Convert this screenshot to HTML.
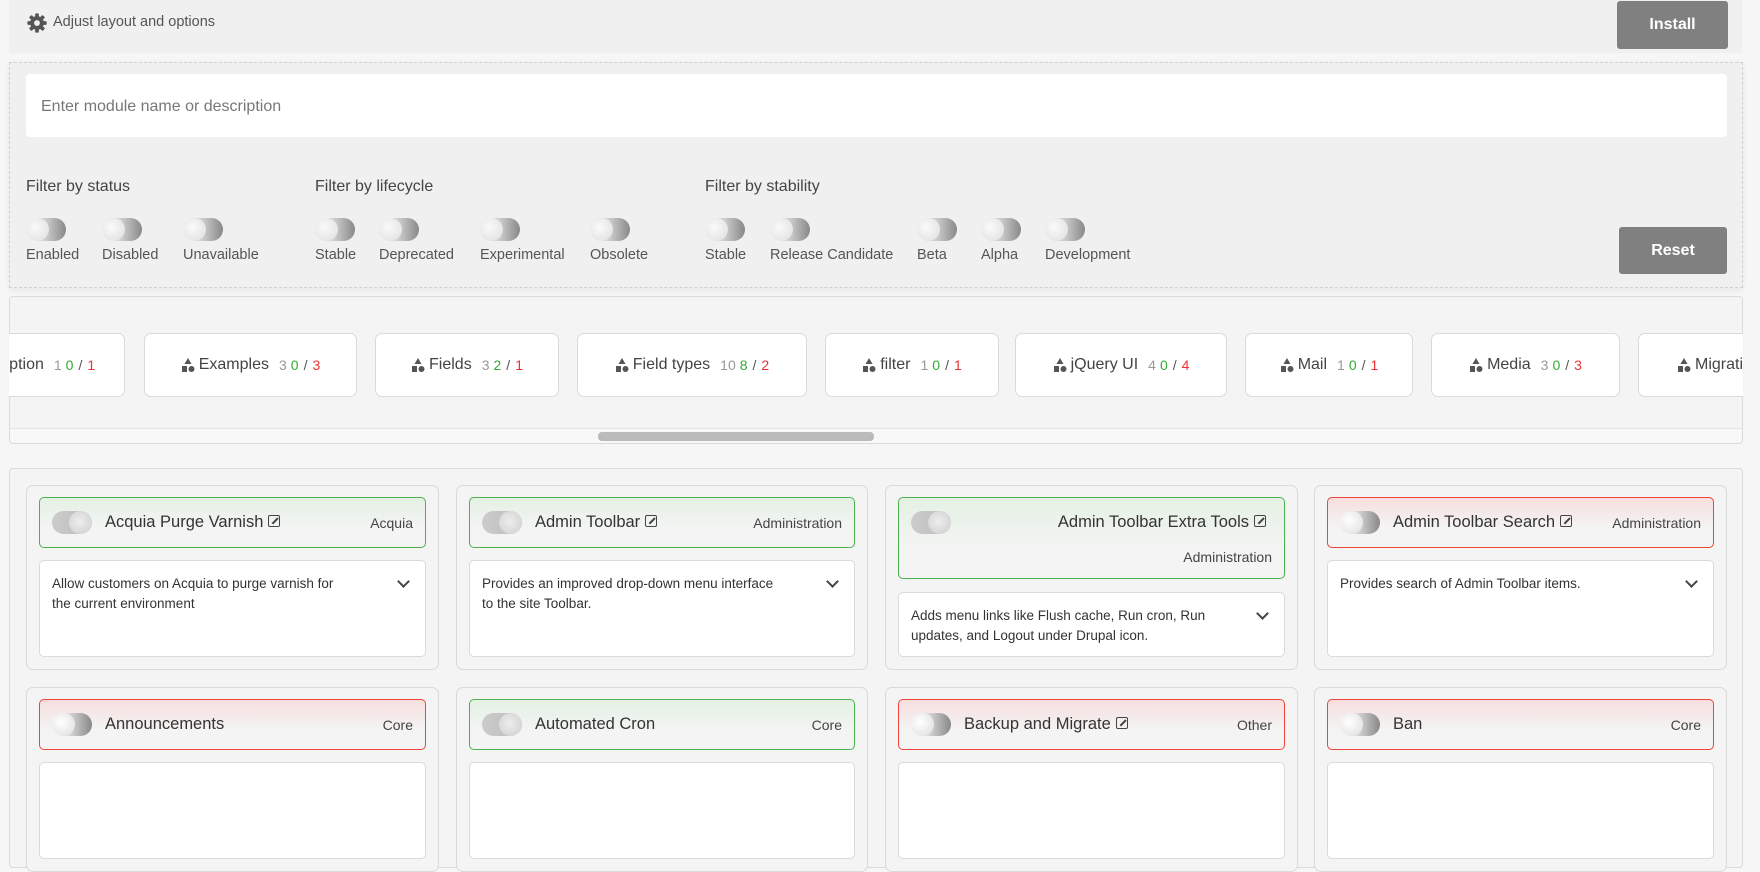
<!DOCTYPE html>
<html><head><meta charset="utf-8"><style>
*{box-sizing:border-box;margin:0;padding:0}
body{width:1760px;height:775px;overflow:hidden;background:#f5f6f5;font-family:"Liberation Sans",sans-serif;color:#333;position:relative}
.a{position:absolute}
.btn{background:#808080;color:#fff;font-weight:bold;font-size:16px;border-radius:3px;display:flex;align-items:center;justify-content:center}
.tg{position:absolute;width:40px;height:23px;border-radius:12px;background:linear-gradient(90deg,#eee,#ccc 50%,#888)}
.tg:before{content:"";position:absolute;left:0;top:0;width:23px;height:23px;border-radius:50%;background:radial-gradient(circle at 40% 40%,#fafafa,#ddd)}
.tl{position:absolute;font-size:14.5px;color:#555;top:247px}
.fh{position:absolute;top:178px;font-size:16px;color:#444}
.cat{position:absolute;top:333px;height:64px;background:#fff;border:1px solid #d8dbd8;border-radius:7px;display:flex;align-items:center;justify-content:center;font-size:16px;color:#444;white-space:nowrap}
.ic{display:inline-block;width:14px;height:14px;margin-right:4px;vertical-align:-1px}
.n{font-size:14px;margin-left:10px;color:#999}.g{color:#3a3;font-size:14px;margin-left:4px}.r{color:#e33;font-size:14px}.s{font-size:14px;color:#555;margin:0 5px}
.mc{position:absolute;background:#f3f4f3;border:1px solid #d8dbd8;border-radius:7px}
.hd{position:absolute;left:12px;right:12px;top:11px;height:51px;border-radius:5px;background:linear-gradient(#e4f1e3,#f3f4f3 60%);border:1px solid #4caf50}
.hd.red{background:linear-gradient(#f7dede,#f3f4f3 60%);border-color:#f0443a}
.mt{position:absolute;width:40px;height:23px;border-radius:12px;background:linear-gradient(90deg,#ccc,#bbb);left:12px;top:13px}
.mt:after{content:"";position:absolute;right:0;top:0;width:23px;height:23px;border-radius:50%;background:radial-gradient(circle at 45% 45%,#eee,#ccc)}
.red .mt{background:linear-gradient(90deg,#f5f5f5,#ddd 40%,#888)}
.red .mt:after{left:0;right:auto;background:radial-gradient(circle at 40% 40%,#fff,#ddd)}
.ttl{position:absolute;left:65px;top:15px;font-size:16.5px;color:#333;white-space:nowrap}
.ccat{position:absolute;right:12px;top:17px;font-size:14px;color:#444}
.ext{display:inline-block;width:12px;height:12px;border:1.5px solid #444;border-radius:2px;margin-left:5px;position:relative;vertical-align:0}
.ext:after{content:"";position:absolute;right:0;top:4px;width:8px;height:1.5px;background:#444;transform:rotate(-45deg)}
.ds{position:absolute;left:12px;right:12px;top:74px;height:97px;background:#fff;border:1px solid #d8dbd8;border-radius:5px;padding:13px 70px 0 12px;font-size:13.5px;line-height:20px;color:#333}
.ch{position:absolute;right:17px;top:16px;width:9px;height:9px;border-right:2.5px solid #444;border-bottom:2.5px solid #444;transform:rotate(45deg)}
</style></head><body>
<div class="a" style="left:9px;top:0;width:1733px;height:53px;background:#f0f0f0"></div>
<svg class="a" style="left:26px;top:12px" width="22" height="22" viewBox="0 0 24 24"><g fill="#555"><circle cx="12" cy="12" r="7.5"/><rect x="10" y="1.5" width="4" height="21" rx="1"/><rect x="10" y="1.5" width="4" height="21" rx="1" transform="rotate(45 12 12)"/><rect x="10" y="1.5" width="4" height="21" rx="1" transform="rotate(90 12 12)"/><rect x="10" y="1.5" width="4" height="21" rx="1" transform="rotate(135 12 12)"/></g><circle cx="12" cy="12" r="3.2" fill="#f0f0f0"/></svg>
<div class="a" style="left:53px;top:14px;font-size:14.5px;color:#555">Adjust layout and options</div>
<div class="a btn" style="left:1617px;top:1px;width:111px;height:48px">Install</div>

<div class="a" style="left:9px;top:62px;width:1734px;height:226px;background:#f0f0f0;border:1px dashed #d0d0d0;box-shadow:0 2px 6px rgba(0,0,0,.06)"></div>
<div class="a" style="left:26px;top:74px;width:1701px;height:63px;background:#fff;border-radius:4px;font-size:16px;color:#777;padding:24px 0 0 15px">Enter module name or description</div>
<div class="fh" style="left:26px">Filter by status</div>
<div class="fh" style="left:315px">Filter by lifecycle</div>
<div class="fh" style="left:705px">Filter by stability</div>
<div class="tg" style="left:26px;top:218px"></div><div class="tl" style="left:26px">Enabled</div>
<div class="tg" style="left:102px;top:218px"></div><div class="tl" style="left:102px">Disabled</div>
<div class="tg" style="left:183px;top:218px"></div><div class="tl" style="left:183px">Unavailable</div>
<div class="tg" style="left:315px;top:218px"></div><div class="tl" style="left:315px">Stable</div>
<div class="tg" style="left:379px;top:218px"></div><div class="tl" style="left:379px">Deprecated</div>
<div class="tg" style="left:480px;top:218px"></div><div class="tl" style="left:480px">Experimental</div>
<div class="tg" style="left:590px;top:218px"></div><div class="tl" style="left:590px">Obsolete</div>
<div class="tg" style="left:705px;top:218px"></div><div class="tl" style="left:705px">Stable</div>
<div class="tg" style="left:770px;top:218px"></div><div class="tl" style="left:770px">Release Candidate</div>
<div class="tg" style="left:917px;top:218px"></div><div class="tl" style="left:917px">Beta</div>
<div class="tg" style="left:981px;top:218px"></div><div class="tl" style="left:981px">Alpha</div>
<div class="tg" style="left:1045px;top:218px"></div><div class="tl" style="left:1045px">Development</div>
<div class="a btn" style="left:1619px;top:227px;width:108px;height:47px">Reset</div>

<div class="a" style="left:9px;top:296px;width:1734px;height:148px;background:#f3f4f3;border:1px solid #d8dbd8;border-radius:4px;overflow:hidden">
<div class="a" style="left:0;top:131px;width:100%;height:17px;background:#f8f8f8;border-top:1px solid #e4e4e4"></div>
<div class="a" style="left:588px;top:135px;width:276px;height:9px;border-radius:4px;background:#bbb"></div>
</div>
<svg width="0" height="0" style="position:absolute"><defs><symbol id="sh" viewBox="0 0 14 14"><path d="M7 0L10.5 6H3.5Z" fill="#555"/><rect x="1" y="8" width="5" height="6" fill="#555"/><circle cx="10.5" cy="11" r="3" fill="#555"/></symbol></defs></svg>
<div class="a" style="left:9px;top:296px;width:1734px;height:130px;overflow:hidden">
<div class="cat" style="left:-75px;width:191px;top:37px">Description<span class="n">1</span><span class="g">0</span><span class="s">/</span><span class="r">1</span></div>
<div class="cat" style="left:135px;width:213px;top:37px"><svg class="ic"><use href="#sh"/></svg>Examples<span class="n">3</span><span class="g">0</span><span class="s">/</span><span class="r">3</span></div>
<div class="cat" style="left:366px;width:184px;top:37px"><svg class="ic"><use href="#sh"/></svg>Fields<span class="n">3</span><span class="g">2</span><span class="s">/</span><span class="r">1</span></div>
<div class="cat" style="left:568px;width:230px;top:37px"><svg class="ic"><use href="#sh"/></svg>Field types<span class="n">10</span><span class="g">8</span><span class="s">/</span><span class="r">2</span></div>
<div class="cat" style="left:816px;width:174px;top:37px"><svg class="ic"><use href="#sh"/></svg>filter<span class="n">1</span><span class="g">0</span><span class="s">/</span><span class="r">1</span></div>
<div class="cat" style="left:1006px;width:212px;top:37px"><svg class="ic"><use href="#sh"/></svg>jQuery UI<span class="n">4</span><span class="g">0</span><span class="s">/</span><span class="r">4</span></div>
<div class="cat" style="left:1236px;width:168px;top:37px"><svg class="ic"><use href="#sh"/></svg>Mail<span class="n">1</span><span class="g">0</span><span class="s">/</span><span class="r">1</span></div>
<div class="cat" style="left:1422px;width:189px;top:37px"><svg class="ic"><use href="#sh"/></svg>Media<span class="n">3</span><span class="g">0</span><span class="s">/</span><span class="r">3</span></div>
<div class="cat" style="left:1629px;width:180px;top:37px;justify-content:flex-start;padding-left:38px"><svg class="ic"><use href="#sh"/></svg>Migration</div>
</div>

<div class="a" style="left:9px;top:468px;width:1734px;height:400px;background:#f3f4f3;border:1px solid #d8dbd8;border-radius:4px"></div>

<div class="mc" style="left:26px;top:485px;width:413px;height:185px"><div class="hd"><div class="mt"></div><div class="ttl">Acquia Purge Varnish<span class="ext"></span></div><div class="ccat">Acquia</div></div><div class="ds">Allow customers on Acquia to purge varnish for the current environment<div class="ch"></div></div></div>
<div class="mc" style="left:456px;top:485px;width:412px;height:185px"><div class="hd"><div class="mt"></div><div class="ttl">Admin Toolbar<span class="ext"></span></div><div class="ccat">Administration</div></div><div class="ds">Provides an improved drop-down menu interface to the site Toolbar.<div class="ch"></div></div></div>
<div class="mc" style="left:885px;top:485px;width:413px;height:185px"><div class="hd" style="height:82px"><div class="mt"></div><div class="ttl" style="left:auto;right:18px">Admin Toolbar Extra Tools<span class="ext"></span></div><div class="ccat" style="top:51px">Administration</div></div><div class="ds" style="top:106px;height:65px;padding-right:50px">Adds menu links like Flush cache, Run cron, Run updates, and Logout under Drupal icon.<div class="ch"></div></div></div>
<div class="mc" style="left:1314px;top:485px;width:413px;height:185px"><div class="hd red"><div class="mt"></div><div class="ttl">Admin Toolbar Search<span class="ext"></span></div><div class="ccat">Administration</div></div><div class="ds">Provides search of Admin Toolbar items.<div class="ch"></div></div></div>

<div class="mc" style="left:26px;top:687px;width:413px;height:185px"><div class="hd red"><div class="mt"></div><div class="ttl">Announcements</div><div class="ccat">Core</div></div><div class="ds"></div></div>
<div class="mc" style="left:456px;top:687px;width:412px;height:185px"><div class="hd"><div class="mt"></div><div class="ttl">Automated Cron</div><div class="ccat">Core</div></div><div class="ds"></div></div>
<div class="mc" style="left:885px;top:687px;width:413px;height:185px"><div class="hd red"><div class="mt"></div><div class="ttl">Backup and Migrate<span class="ext"></span></div><div class="ccat">Other</div></div><div class="ds"></div></div>
<div class="mc" style="left:1314px;top:687px;width:413px;height:185px"><div class="hd red"><div class="mt"></div><div class="ttl">Ban</div><div class="ccat">Core</div></div><div class="ds"></div></div>
</body></html>
